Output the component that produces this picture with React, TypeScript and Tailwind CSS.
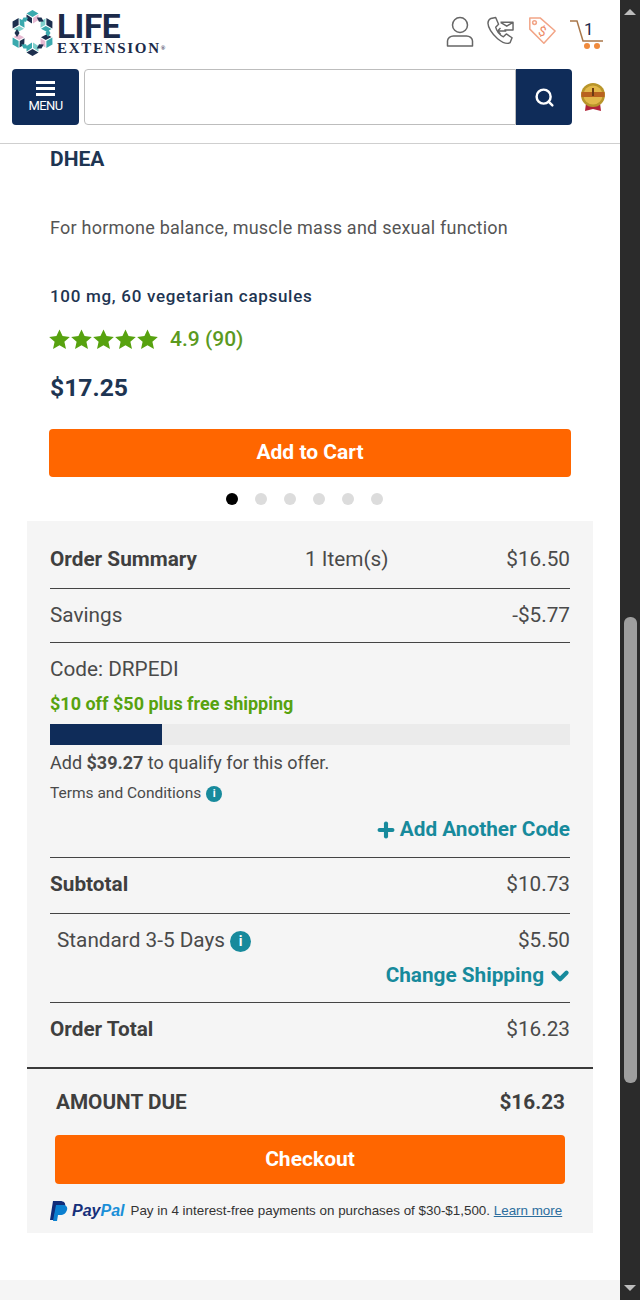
import { ChevronDown, Plus, Search } from "lucide-react"

const font = { fontFamily: "Roboto, sans-serif" }

function LogoMark() {
  const spokes = [0, 60, 120, 180, 240, 300]
  return (
    <svg width="43" height="46" viewBox="-21.5 -23 43 46">
      {spokes.map((a, i) => (
        <g key={a} transform={`rotate(${a})`}>
          {/* cube on the corner of the ring */}
          <polygon points="0,-23 6,-19.5 0,-16 -6,-19.5" fill={i % 2 ? "#1c2f4e" : "#3aa9ae"} />
          <polygon points="-6,-18.5 -0.5,-15 -0.5,-9.5 -6,-13" fill={i % 2 ? "#7fd0cc" : "#1c2f4e"} />
          <polygon points="6,-18.5 0.5,-15 0.5,-9.5 6,-13" fill={i % 2 ? "#3aa9ae" : "#e6b9d2"} />
        </g>
      ))}
      {spokes.map((a, i) => (
        <g key={`m${a}`} transform={`rotate(${a + 30})`}>
          <polygon points="0,-18 4,-15.5 0,-13 -4,-15.5" fill={i % 2 ? "#3aa9ae" : "#1c2f4e"} />
        </g>
      ))}
    </svg>
  )
}

function InfoDot({ size }: { size: string }) {
  return (
    <span className={`${size} inline-flex items-center justify-center rounded-full bg-[#178a9c] text-white font-bold`}>
      i
    </span>
  )
}

function Star() {
  return (
    <svg width="21" height="21" viewBox="0 0 24 24" fill="#57a20f">
      <path d="M12 0.5l3.5 7.6 8.3.9-6.2 5.6 1.8 8.2L12 18.6l-7.4 4.2 1.8-8.2L.2 9l8.3-.9z" />
    </svg>
  )
}

function Row({ left, right, h, bold }: { left: string; right: string; h: string; bold?: boolean }) {
  return (
    <div className={`${h} flex items-center justify-between border-b border-[#444] text-[20.75px] text-[#4a4a4a] ${bold ? "pb-[2px]" : "pb-[0px]"}`}>
      <span className={bold ? "font-bold text-[#3f3f3f]" : ""}>{left}</span>
      <span>{right}</span>
    </div>
  )
}

export default function App() {
  return (
    <div className="h-[1300px] flex overflow-hidden bg-white" style={font}>
      <div className="w-[620px] flex flex-col">
        <header className="h-[144px] shrink-0 border-b border-[#cfcfcf] bg-white">
          <div className="h-[69px] pl-[11px] pr-[16px] flex items-start justify-between">
            <div className="flex pt-[10px]">
              <LogoMark />
              <div className="ml-[3px] flex flex-col">
                <span className="text-[33.5px] leading-[26px] font-bold text-[#1c2b4a] mt-[4px] tracking-[-0.5px]">LIFE</span>
                <span className="mt-[1px] h-[14px] text-[15px] leading-[14px] font-bold text-[#1c2b4a] tracking-[1.7px] whitespace-nowrap" style={{ fontFamily: '"Liberation Serif", serif' }}>
                  EXTENSION<sup className="text-[6px] leading-none">®</sup>
                </span>
              </div>
            </div>
            <div className="flex items-start pt-[16px] gap-[13px]">
              <svg width="28" height="32" viewBox="0 0 28 32" fill="none" stroke="#666" strokeWidth="1.5">
                <circle cx="14" cy="9" r="7.5" />
                <path d="M1.5 30v-5c0-3 3-5 6-5h13c3 0 6 2 6 5v5z" strokeLinejoin="round" />
              </svg>
              <svg width="27" height="30" viewBox="0 0 28 30" fill="none" stroke="#666" strokeWidth="1.5" strokeLinejoin="round">
                <path d="M4 2l5-1 3 7-3 3c1 4 4 8 8 10l3-3 6 4-2 5c-3 2-8 0-13-4C5 18 1 11 1 7c0-2 1-4 3-5z" />
                <path d="M14 6h13v8h-9M14 6l6.5 4 6.5-4M11 15h9m-9 0l3-3m-3 3l3 3" />
              </svg>
              <svg width="30" height="30" viewBox="0 0 32 32" fill="none" stroke="#f2a587" strokeWidth="1.6" strokeLinejoin="round">
                <path d="M3 2h11l16 14-12 13L3 14z" />
                <circle cx="8" cy="7" r="2" />
                <text x="12.5" y="21" fontSize="14" fill="#ee8a64" stroke="none" transform="rotate(18 16 16)">$</text>
              </svg>
              <div className="relative w-[34px] h-[34px]">
                <svg width="34" height="34" viewBox="0 0 34 34" fill="none">
                  <path d="M0 5h7l6 20h20" stroke="#a9774a" strokeWidth="1.5" />
                  <circle cx="17" cy="30" r="3" fill="#f08a3c" />
                  <circle cx="27" cy="30" r="3" fill="#f08a3c" />
                </svg>
                <span className="absolute left-[14px] top-[3px] text-[17px] leading-[20px] text-[#1c2b4a]">1</span>
              </div>
            </div>
          </div>
          <div className="h-[56px] pl-[12px] flex items-center">
            <div className="w-[67px] h-[56px] rounded-[4px] bg-[#0f2c59] flex flex-col items-center justify-center text-white">
              <span className="w-[19px] h-[3px] bg-white" />
              <span className="w-[19px] h-[3px] bg-white mt-[3px]" />
              <span className="w-[19px] h-[3px] bg-white mt-[3px]" />
              <span className="text-[13px] leading-[14px] mt-[3px] tracking-[-0.6px]">MENU</span>
            </div>
            <div className="ml-[5px] w-[432px] h-[56px] rounded-l-[4px] border border-[#bdbdbd] bg-white" />
            <div className="w-[56px] h-[56px] rounded-r-[4px] bg-[#0f2c59] flex items-center justify-center">
              <Search size={21} strokeWidth={2.8} color="white" />
            </div>
            <svg className="ml-[8px]" width="26" height="30" viewBox="0 0 26 30">
              <path d="M6 21l-1 8 8-2 8 2-1-8z" fill="#b2233a" />
              <circle cx="13" cy="13" r="12" fill="#b8952a" />
              <circle cx="13" cy="13" r="9.5" fill="#e2b84a" />
              <rect x="1.5" y="10" width="23" height="5" fill="#b8621f" />
              <rect x="12" y="6" width="2" height="8" fill="#6b3a12" />
            </svg>
          </div>
        </header>

        <main className="flex-1 flex flex-col">
          <div className="px-[50px]">
            <h2 className="text-[21px] leading-[30px] font-bold text-[#1e3552]">DHEA</h2>
            <p className="mt-[39px] text-[18px] leading-[30px] text-[#555] tracking-[0.23px] whitespace-nowrap">
              For hormone balance, muscle mass and sexual function
            </p>
            <p className="mt-[38px] text-[17px] leading-[30px] font-medium text-[#1e3552] tracking-[0.7px] whitespace-nowrap">
              100 mg, 60 vegetarian capsules
            </p>
            <div className="mt-[14px] h-[30px] flex items-center">
              <div className="flex gap-[1px] -ml-[1px] -mt-[2px]">
                <Star /><Star /><Star /><Star /><Star />
              </div>
              <span className="ml-[12px] text-[21px] font-medium text-[#5b9a1e]">4.9 (90)</span>
            </div>
            <p className="mt-[16px] text-[24.7px] leading-[34px] font-bold text-[#1e3552]">$17.25</p>
          </div>

          <div className="mt-[24px] px-[49px]">
            <button className="w-full h-[48px] rounded-[4px] bg-[#ff6600] text-white text-[21px] font-bold">
              Add to Cart
            </button>
          </div>
          <div className="mt-[16px] h-[13px] pr-[12px] flex justify-center gap-[17px]">
            <span className="w-[12px] h-[12px] rounded-full bg-black" />
            <span className="w-[12px] h-[12px] rounded-full bg-[#dcdcdc]" />
            <span className="w-[12px] h-[12px] rounded-full bg-[#dcdcdc]" />
            <span className="w-[12px] h-[12px] rounded-full bg-[#dcdcdc]" />
            <span className="w-[12px] h-[12px] rounded-full bg-[#dcdcdc]" />
            <span className="w-[12px] h-[12px] rounded-full bg-[#dcdcdc]" />
          </div>

          <section className="mt-[15px] mx-[27px] w-[566px] h-[712px] bg-[#f5f5f5] flex flex-col">
            <div className="px-[23px] pt-[11px]">
              <div className="h-[57px] grid grid-cols-[255px_auto_1fr] items-center border-b border-[#444] text-[20.75px] text-[#4a4a4a]">
                <span className="font-bold text-[#3f3f3f]">Order Summary</span>
                <span>1 Item(s)</span>
                <span className="text-right">$16.50</span>
              </div>
              <Row left="Savings" right="-$5.77" h="h-[54px]" />
              <div className="h-[54px] flex items-center text-[20.75px] text-[#4a4a4a]">Code: DRPEDI</div>
              <p className="-mt-[3px] text-[18px] leading-[20px] font-bold text-[#57a20f]">$10 off $50 plus free shipping</p>
              <div className="mt-[10px] h-[21px] bg-[#ebebeb]">
                <div className="w-[112px] h-full bg-[#0f2c59]" />
              </div>
              <p className="mt-[7px] text-[18px] leading-[22px] text-[#4a4a4a]">
                Add <b>$39.27</b> to qualify for this offer.
              </p>
              <p className="mt-[9px] h-[22px] flex items-center gap-[5px] text-[15.5px] text-[#4a4a4a]">
                Terms and Conditions <InfoDot size="w-[16px] h-[16px] text-[11px]" />
              </p>
              <div className="mt-[12px] h-[26px] flex items-center justify-end text-[20.75px] font-bold text-[#178a9c]">
                <Plus size={22} strokeWidth={4.5} className="mr-[3px]" />
                Add Another Code
              </div>
              <div className="mt-[14px] border-t border-[#444]" />
              <Row left="Subtotal" right="$10.73" h="h-[56px]" bold />
              <div className="h-[89px] border-b border-[#444] text-[20.75px] text-[#4a4a4a]">
                <div className="h-[54px] flex items-center justify-between">
                  <span className="flex items-center gap-[5px] pl-[7px]">
                    Standard 3-5 Days <InfoDot size="w-[21px] h-[21px] text-[14px]" />
                  </span>
                  <span>$5.50</span>
                </div>
                <div className="-mt-[5px] h-[26px] flex items-center justify-end font-bold text-[#178a9c]">
                  Change Shipping
                  <ChevronDown size={26} strokeWidth={4} className="ml-[3px] -mr-[3px]" />
                </div>
              </div>
              <div className="h-[64px] pb-[10px] flex items-center justify-between text-[20.75px] text-[#4a4a4a]">
                <span className="font-bold text-[#3f3f3f]">Order Total</span>
                <span>$16.23</span>
              </div>
            </div>
            <div className="border-t-2 border-[#3a3a3a] px-[28px]">
              <div className="h-[66px] pt-[2px] flex items-center justify-between text-[20.75px] font-bold text-[#3f3f3f]">
                <span className="pl-[1px]">AMOUNT DUE</span>
                <span>$16.23</span>
              </div>
              <button className="w-[510px] h-[49px] rounded-[4px] bg-[#ff6600] text-white text-[21px] font-bold">
                Checkout
              </button>
              <div className="mt-[15px] -ml-[5px] flex items-center whitespace-nowrap">
                <svg width="18" height="20" viewBox="0 0 18 20">
                  <path d="M3 0h7c4 0 6 2 5 6-1 4-4 6-8 6H5l-1 7H0z" fill="#0f2c7a" />
                  <path d="M6 4h7c3 0 5 2 4 5-1 3-3 5-7 5H8l-1 6H3z" fill="#0a7fd0" />
                </svg>
                <span className="ml-[4px] text-[16px] font-bold italic text-[#15307a]" style={{ fontFamily: '"Liberation Sans", sans-serif' }}>
                  Pay<span className="text-[#1a8fd8]">Pal</span>
                </span>
                <span className="ml-[6px] text-[13.4px] text-[#333]" style={{ fontFamily: '"Liberation Sans", sans-serif' }}>
                  Pay in 4 interest-free payments on purchases of $30-$1,500. <span className="underline text-[#2c6e9e]">Learn more</span>
                </span>
              </div>
            </div>
          </section>
          <div className="mt-auto h-[20px] bg-[#f5f5f5]" />
        </main>
      </div>

      <aside className="w-[20px] shrink-0 bg-[#2b2b2b] flex flex-col items-center">
        <span className="mt-[9px] w-0 h-0 border-x-[6px] border-x-transparent border-b-[6px] border-b-[#bdbdbd]" />
        <div className="mt-[602px] w-[13px] h-[466px] rounded-[6px] bg-[#9e9e9e]" />
        <span className="mt-auto mb-[9px] w-0 h-0 border-x-[6px] border-x-transparent border-t-[6px] border-t-[#bdbdbd]" />
      </aside>
    </div>
  )
}
